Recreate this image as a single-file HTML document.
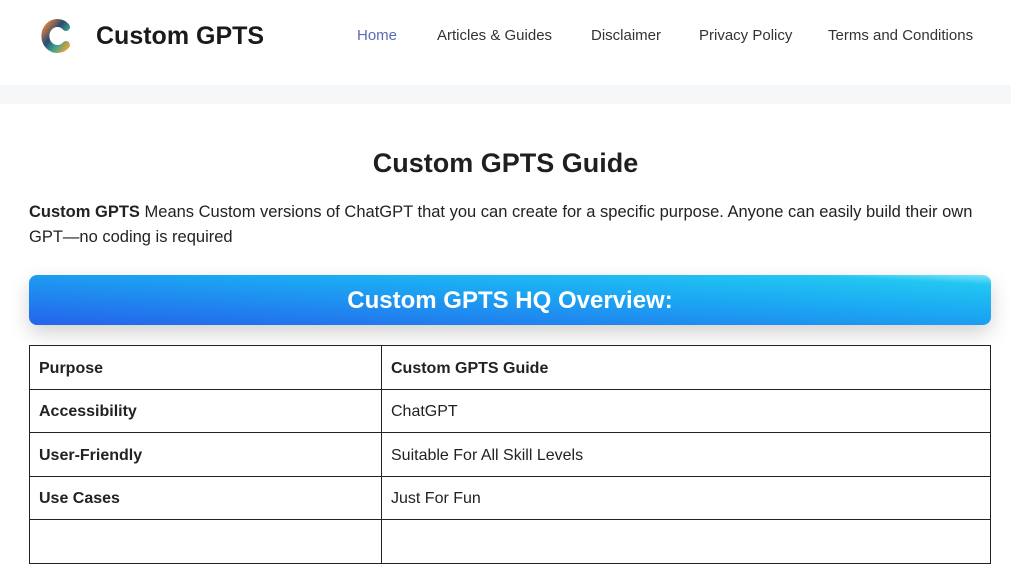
<!DOCTYPE html>
<html><head><style>
body{margin:0;width:1011px;height:522px;overflow:hidden;background:#fff;font-family:"Liberation Sans",sans-serif;color:#1f1f1f}
.hdr{height:85px;position:relative}
.logo{position:absolute;left:38px;top:18px;width:34px;height:36px}
.brand{position:absolute;left:96px;top:22px;font-size:25px;font-weight:bold;color:#1a1a1a}
.nav{position:absolute;top:27px;font-size:15px;color:#333}
.band{height:19px;background:#f6f7f9}
h1{margin:0;position:absolute;top:148px;left:0;width:1011px;text-align:center;font-size:27px}
p{position:absolute;top:200px;left:29px;width:965px;margin:0;font-size:16.5px;line-height:25px;color:#222}
.ban{position:absolute;left:29px;top:275px;width:962px;height:50px;border-radius:8px;background:linear-gradient(to top right,#2563eb 0%,#1ba8f3 60%,#22c6f2 90%,#7fe3f8 100%);box-shadow:0 8px 20px rgba(0,0,0,.18);color:#fff;font-weight:bold;font-size:24px;text-align:center;line-height:52px}
table{position:absolute;left:29px;top:345px;width:962px;border-collapse:collapse;font-size:16px}
td{border:1px solid #222;height:39.5px;padding:3px 9px 0;color:#222}
td:first-child{width:333px;font-weight:bold}
</style></head><body>
<div class="hdr">
<svg class="logo" viewBox="0 0 34 36"><defs><linearGradient id="g" x1="0" y1="0" x2="1" y2="1"><stop offset="0" stop-color="#e8833a"/><stop offset=".4" stop-color="#2b4a6f"/><stop offset=".7" stop-color="#3aa38c"/><stop offset="1" stop-color="#e0a040"/></linearGradient></defs><path d="M28 9 A12 13 0 1 0 28 27" fill="none" stroke="url(#g)" stroke-width="8" stroke-linecap="round"/></svg>
<div class="brand">Custom GPTS</div>
<div class="nav" style="left:357px;color:#5b6bb5">Home</div>
<div class="nav" style="left:437px">Articles &amp; Guides</div>
<div class="nav" style="left:591px">Disclaimer</div>
<div class="nav" style="left:699px">Privacy Policy</div>
<div class="nav" style="left:828px">Terms and Conditions</div>
</div>
<div class="band"></div>
<h1>Custom GPTS Guide</h1>
<p><b>Custom GPTS</b> Means Custom versions of ChatGPT that you can create for a specific purpose. Anyone can easily build their own GPT—no coding is required</p>
<div class="ban">Custom GPTS HQ Overview:</div>
<table>
<tr><td>Purpose</td><td><b>Custom GPTS Guide</b></td></tr>
<tr><td>Accessibility</td><td>ChatGPT</td></tr>
<tr><td>User-Friendly</td><td>Suitable For All Skill Levels</td></tr>
<tr><td>Use Cases</td><td>Just For Fun</td></tr>
<tr><td>&nbsp;</td><td></td></tr>
</table>
</body></html>
